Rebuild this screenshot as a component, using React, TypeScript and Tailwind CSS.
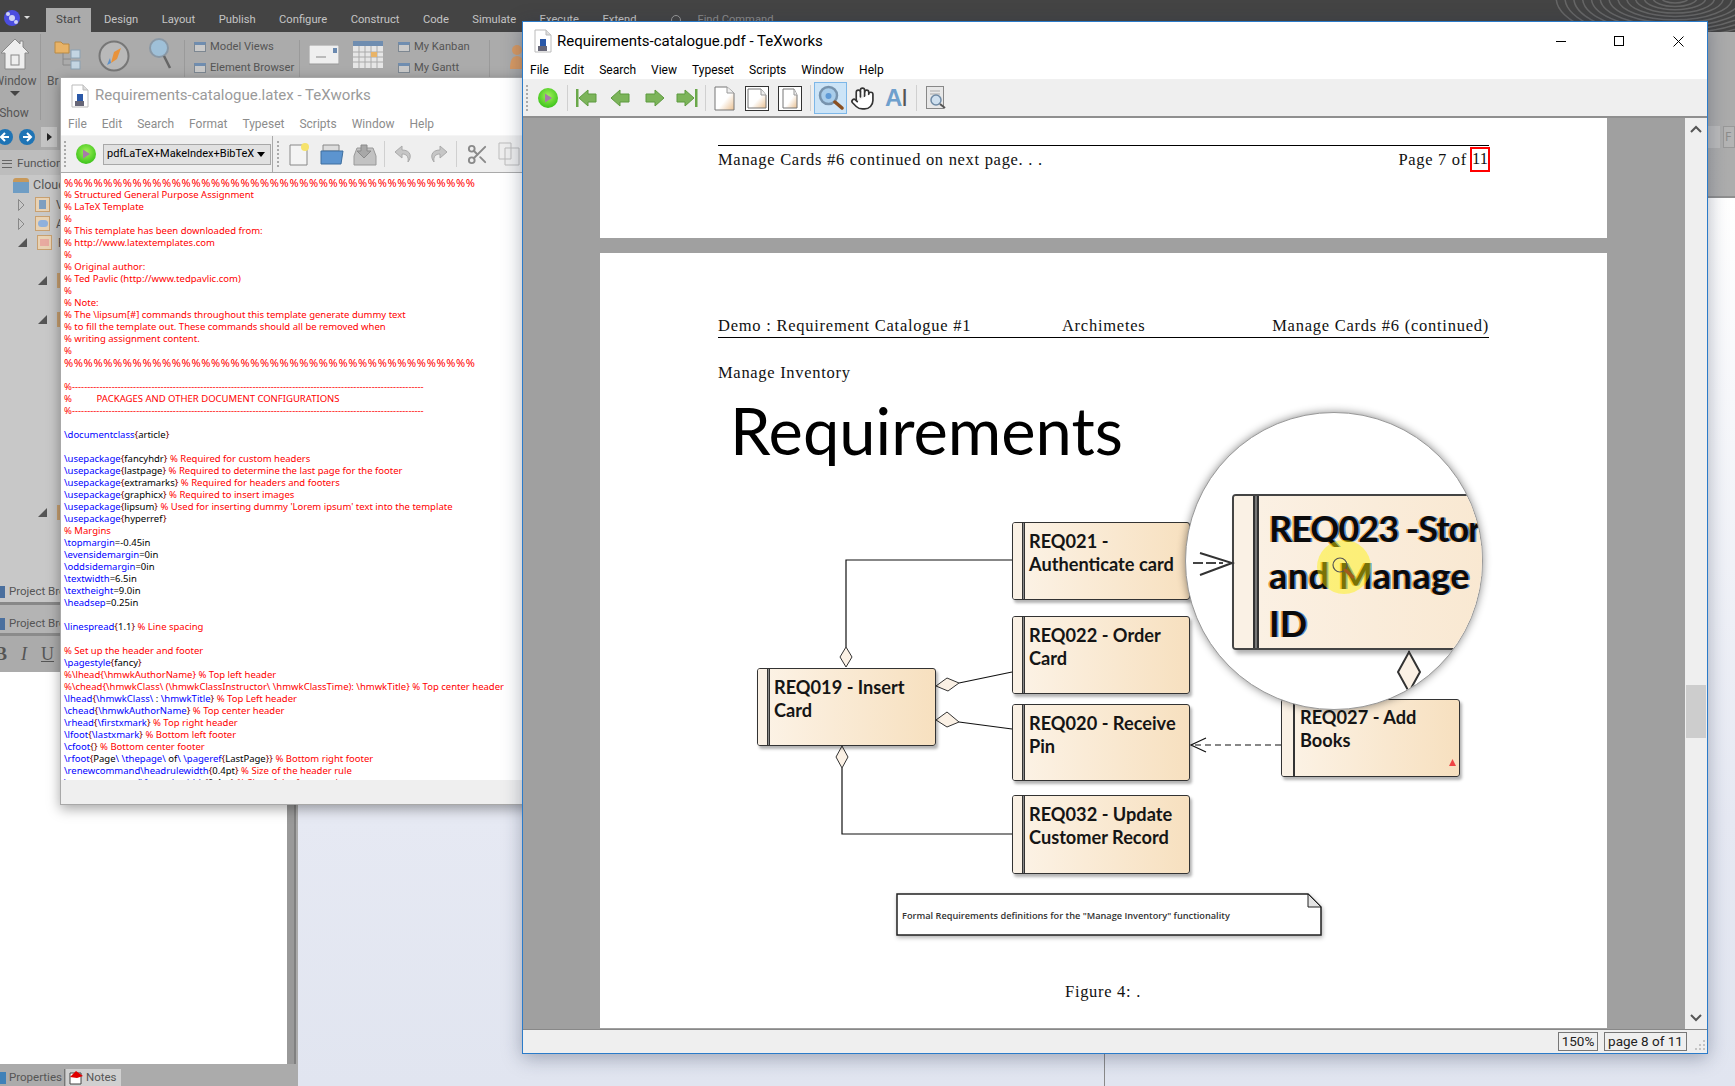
import { Hand, Scissors } from 'lucide-react'

const ui = "font-['Roboto',sans-serif]"
const pct42 = '%'.repeat(42)
const dashes = '-'.repeat(115)

const sourceLines = [
  pct42,
  '% Structured General Purpose Assignment',
  '% LaTeX Template',
  '%',
  '% This template has been downloaded from:',
  '% http://www.latextemplates.com',
  '%',
  '% Original author:',
  '% Ted Pavlic (http://www.tedpavlic.com)',
  '%',
  '% Note:',
  '% The \\lipsum[#] commands throughout this template generate dummy text',
  '% to fill the template out. These commands should all be removed when',
  '% writing assignment content.',
  '%',
  pct42,
  '',
  '%' + dashes,
  '%\u00a0\u00a0\u00a0\u00a0\u00a0\u00a0\u00a0\u00a0\u00a0\u00a0PACKAGES AND OTHER DOCUMENT CONFIGURATIONS',
  '%' + dashes,
  '',
  '\\documentclass{article}',
  '',
  '\\usepackage{fancyhdr} % Required for custom headers',
  '\\usepackage{lastpage} % Required to determine the last page for the footer',
  '\\usepackage{extramarks} % Required for headers and footers',
  '\\usepackage{graphicx} % Required to insert images',
  "\\usepackage{lipsum} % Used for inserting dummy 'Lorem ipsum' text into the template",
  '\\usepackage{hyperref}',
  '% Margins',
  '\\topmargin=-0.45in',
  '\\evensidemargin=0in',
  '\\oddsidemargin=0in',
  '\\textwidth=6.5in',
  '\\textheight=9.0in',
  '\\headsep=0.25in',
  '',
  '\\linespread{1.1} % Line spacing',
  '',
  '% Set up the header and footer',
  '\\pagestyle{fancy}',
  '%\\lhead{\\hmwkAuthorName} % Top left header',
  '%\\chead{\\hmwkClass\\ (\\hmwkClassInstructor\\ \\hmwkClassTime): \\hmwkTitle} % Top center header',
  '\\lhead{\\hmwkClass\\ : \\hmwkTitle} % Top Left header',
  '\\chead{\\hmwkAuthorName} % Top center header',
  '\\rhead{\\firstxmark} % Top right header',
  '\\lfoot{\\lastxmark} % Bottom left footer',
  '\\cfoot{} % Bottom center footer',
  '\\rfoot{Page\\ \\thepage\\ of\\ \\pageref{LastPage}} % Bottom right footer',
  '\\renewcommand\\headrulewidth{0.4pt} % Size of the header rule',
  '\\renewcommand\\footrulewidth{0.4pt} % Size of the footer rule',
]

function SourceLine({ text }: { text: string }) {
  const at = text.indexOf('%')
  const code = at < 0 ? text : text.slice(0, at)
  const comment = at < 0 ? '' : text.slice(at)
  const parts = code.split(/(\\[a-zA-Z]*|[{}])/).filter(Boolean)
  const spread = text === pct42 ? 'text-[11px] tracking-[0.66px]' : ''
  return (
    <div className={`h-[12px] whitespace-pre leading-[12px] ${spread}`}>
      {parts.map((p, i) => {
        const tone = p[0] === '\\' ? 'text-[#0000ff]' : p === '{' || p === '}' ? 'text-[#800000]' : 'text-black'
        return <span key={i} className={tone}>{p}</span>
      })}
      <span className="text-[#ff0000]">{comment}</span>
      {text === '' ? '\u00a0' : null}
    </div>
  )
}

function DocIcon({ dim = false }: { dim?: boolean }) {
  return (
    <svg width="18" height="24" viewBox="0 0 18 24" className={dim ? 'shrink-0 opacity-70' : 'shrink-0'}>
      <path d="M1 1h11l5 5v17H1z" fill="#fff" stroke="#bbb" />
      <path d="M12 1v5h5" fill="#ddd" stroke="#bbb" />
      <rect x="4" y="17" width="9" height="5" fill="#667" />
      <rect x="6" y="10" width="6" height="7" fill="#2a58a8" />
    </svg>
  )
}

function GoButton() {
  return (
    <svg width="20" height="20" viewBox="0 0 20 20" className="shrink-0">
      <defs>
        <radialGradient id="go" cx="50%" cy="40%" r="60%">
          <stop offset="0" stopColor="#a4f25a" />
          <stop offset="1" stopColor="#3bc31a" />
        </radialGradient>
      </defs>
      <circle cx="10" cy="10" r="10" fill="url(#go)" />
      <path d="M7 5.5l7 4.5-7 4.5z" fill="#a77ba8" />
    </svg>
  )
}

function Arrow({ path, bar }: { path: string; bar?: string }) {
  return (
    <svg width="22" height="20" viewBox="0 0 22 20" className="shrink-0">
      <path d={path} fill="#7cb45a" stroke="#5d9a3f" />
      {bar ? <rect x={bar === 'l' ? 1 : 19} y="1" width="2.5" height="18" fill="#6aa84a" /> : null}
    </svg>
  )
}

function PageIcon({ w, framed }: { w: number; framed: number }) {
  return (
    <svg width={w} height="25" viewBox={`0 0 ${w} 25`} className="shrink-0">
      <defs>
        <linearGradient id={`pg${w}${framed}`} x1="0" y1="0" x2="1" y2="1">
          <stop offset="0.55" stopColor="#fff" />
          <stop offset="1" stopColor="#e9bf90" />
        </linearGradient>
      </defs>
      {framed ? <rect x="0.5" y="0.5" width={w - 1} height="24" fill="#fff" stroke="#333" /> : null}
      <path d={`M${framed + 1} ${framed ? 3 : 1}H${w - 8}L${w - framed - 1} ${framed ? 9 : 7}V${framed ? 22 : 24}H${framed + 1}z`} fill={`url(#pg${w}${framed})`} stroke="#777" />
      <path d={`M${w - 8} ${framed ? 3 : 1}V${framed ? 9 : 7}H${w - framed - 1}`} fill="#eee" stroke="#999" />
    </svg>
  )
}

function Glass({ size = 26 }: { size?: number }) {
  return (
    <svg width={size} height={size} viewBox="0 0 26 26" className="shrink-0">
      <circle cx="10.5" cy="10.5" r="8.5" fill="#a9cdea" stroke="#7793ad" strokeWidth="2.5" />
      <circle cx="10.5" cy="11" r="3" fill="#5f9ad6" />
      <path d="M17 17l7 6" stroke="#8a4f20" strokeWidth="3.5" strokeLinecap="round" />
    </svg>
  )
}

function WinIcon() {
  return (
    <span className="h-[10px] w-[12px] shrink-0 border border-[#7d8791] border-t-[3px] border-t-[#6f8db0] bg-[#c9c9c9]" />
  )
}

function Sep({ tone = 'bg-[#d0d0d0]', h = 'h-[26px]' }: { tone?: string; h?: string }) {
  return <span className={`block w-px shrink-0 ${h} ${tone}`} />
}

function Grip() {
  return <span className="block h-[26px] w-[3px] shrink-0 border-l-2 border-dotted border-[#aaa]" />
}

function TopBar() {
  return (
    <div className={`relative flex h-[32px] shrink-0 items-end overflow-hidden bg-[#444] ${ui}`}>
      <svg width="28" height="20" viewBox="0 0 28 20" className="mb-[4px] ml-[3px] shrink-0">
        <circle cx="9" cy="10" r="8" fill="#4b4de0" />
        <circle cx="9" cy="10" r="3" fill="#cfd2f5" />
        <circle cx="5" cy="6" r="2" fill="#cfd2f5" />
        <circle cx="13" cy="14" r="2" fill="#cfd2f5" />
        <path d="M21 8h6l-3 3z" fill="#ddd" />
      </svg>
      <div className="ml-[15px] flex h-[24px] w-[45px] items-center justify-center bg-[#ababab] text-[11.5px] text-[#444]">Start</div>
      <div className="ml-[13px] flex h-[24px] items-center gap-[23.5px] text-[11.2px] text-[#c4c4c4]">
        <span>Design</span>
        <span>Layout</span>
        <span>Publish</span>
        <span>Configure</span>
        <span>Construct</span>
        <span>Code</span>
        <span>Simulate</span>
        <span>Execute</span>
        <span>Extend</span>
        <svg width="12" height="12" viewBox="0 0 12 12" className="ml-[10px]"><circle cx="6" cy="6" r="4.5" fill="none" stroke="#999" /></svg>
        <span className="-ml-[8px] text-[#8b8b8b]">Find Command</span>
      </div>
      <svg width="190" height="32" viewBox="0 0 190 32" className="absolute right-0 top-0">
        {[12, 20, 28, 36, 44, 52, 60, 68, 76, 84, 92, 100, 108].map(r => (
          <ellipse key={r} cx="130" cy="-2" rx={r * 1.1} ry={r * 0.42} fill="none" stroke="#666" strokeWidth="1.5" />
        ))}
      </svg>
    </div>
  )
}

function Ribbon() {
  return (
    <div className={`flex h-[88px] shrink-0 items-start bg-[#ababab] text-[#555] ${ui}`}>
      <div className="flex w-[40px] shrink-0 flex-col items-center text-[12px] leading-[16px]">
        <svg width="30" height="32" viewBox="0 0 30 32" className="mt-[6px] -ml-[10px]">
          <path d="M15 1L1 15h4v16h20V15h4L23 9V3h-3v3z" fill="#eee" stroke="#888" />
          <rect x="11" y="17" width="8" height="10" fill="#eee" stroke="#888" />
        </svg>
        <span className="mt-[3px] -ml-[10px]">Window</span>
        <span className="mt-[2px] -ml-[10px] h-0 w-0 border-x-[5px] border-t-[5px] border-x-transparent border-t-[#444]" />
        <span className="mt-[9px] -ml-[12px]">Show</span>
      </div>
      <span className="mt-[2px] h-[86px] w-px bg-[#9a9a9a]" />
      <div className="ml-[6px] flex flex-col text-[12px]">
        <svg width="30" height="30" viewBox="0 0 30 30" className="mt-[8px] ml-[6px]">
          <path d="M2 2h6l2 2h6v9H2z" fill="#e8b367" stroke="#b98a45" />
          <path d="M10 13v12h8M10 19h8" fill="none" stroke="#888" />
          <rect x="18" y="10" width="9" height="8" fill="#c3d5e2" stroke="#8ba2b3" />
          <rect x="18" y="21" width="9" height="8" fill="#c3d5e2" stroke="#8ba2b3" />
        </svg>
        <span className="mt-[2px]">Br</span>
      </div>
      <svg width="32" height="32" viewBox="0 0 32 32" className="ml-[15px] mt-[8px]">
        <circle cx="16" cy="16" r="14.5" fill="#b9b9b9" stroke="#777" strokeWidth="2" />
        <path d="M23 8l-4 11-6 4 3-11z" fill="#e8923a" />
        <path d="M13 23l-4 2 3-7z" fill="#5a8fc9" />
      </svg>
      <svg width="24" height="32" viewBox="0 0 24 32" className="ml-[19px] mt-[6px]">
        <circle cx="10" cy="10" r="9" fill="#9fc0d8" stroke="#8a98a5" strokeWidth="2" />
        <path d="M15 18l6 12" stroke="#666" strokeWidth="2.5" />
      </svg>
      <span className="ml-[11px] mt-[8px] h-[70px] w-px bg-[#9a9a9a]" />
      <div className="ml-[9px] mt-[7px] flex w-[105px] shrink-0 flex-col gap-[5px] whitespace-nowrap text-[11.2px] text-[#555]">
        <div className="flex h-[16px] items-center gap-[4px]"><WinIcon />Model Views</div>
        <div className="flex h-[16px] items-center gap-[4px]"><WinIcon />Element Browser</div>
      </div>
      <span className="mt-[8px] h-[70px] w-px bg-[#9a9a9a]" />
      <svg width="30" height="20" viewBox="0 0 30 20" className="ml-[9px] mt-[13px] shrink-0">
        <rect width="30" height="19" fill="#efefef" stroke="#999" />
        <rect x="24" y="3" width="4" height="5" fill="#6b8ab0" />
        <rect x="7" y="11" width="10" height="2" fill="#bbb" />
      </svg>
      <svg width="30" height="27" viewBox="0 0 30 27" className="ml-[14px] mt-[9px] shrink-0">
        <rect width="30" height="5" fill="#6f8db0" />
        <rect y="5" width="30" height="22" fill="#e6e6e6" />
        <path d="M6 5v22M12 5v22M18 5v22M24 5v22M0 11h30M0 16h30M0 21h30" stroke="#aaa" />
        <rect x="18" y="11" width="6" height="5" fill="#e8b367" />
      </svg>
      <div className="ml-[15px] mt-[7px] flex w-[91px] shrink-0 flex-col gap-[5px] whitespace-nowrap text-[11.2px] text-[#555]">
        <div className="flex h-[16px] items-center gap-[4px]"><WinIcon />My Kanban</div>
        <div className="flex h-[16px] items-center gap-[4px]"><WinIcon />My Gantt</div>
      </div>
      <span className="mt-[8px] h-[70px] w-px bg-[#9a9a9a]" />
      <svg width="16" height="28" viewBox="0 0 16 28" className="ml-[19px] mt-[9px] shrink-0">
        <circle cx="8" cy="9" r="5" fill="#d89a63" />
        <path d="M1 28c0-10 3-13 7-13s7 3 7 13z" fill="#d89a63" />
      </svg>
    </div>
  )
}

function TreeRow({ icon, arrow, label }: { icon: string; arrow: 'open' | 'solid'; label: string }) {
  return (
    <div className="flex h-[19px] items-center pl-[18px]">
      {arrow === 'open' ? (
        <svg width="7" height="12" viewBox="0 0 7 12" className="shrink-0"><path d="M0.5 0.5L6 6L0.5 11.5Z" fill="none" stroke="#888" /></svg>
      ) : (
        <span className="h-0 w-0 border-b-[9px] border-l-[9px] border-b-[#555] border-l-transparent" />
      )}
      <span className={`ml-[10px] flex h-[15px] w-[15px] items-center justify-center border border-[#c8a070] bg-[#e8d2b4]`}>
        <span className={icon} />
      </span>
      <span className="ml-[6px] text-[12px] text-[#555]">{label}</span>
    </div>
  )
}

function CircleArrow({ d }: { d: string }) {
  return (
    <svg width="16" height="16" viewBox="0 0 16 16" className="shrink-0">
      <circle cx="8" cy="8" r="8" fill="#1f74b5" />
      <path d={d} fill="none" stroke="#fff" strokeWidth="2" />
    </svg>
  )
}

function LeftColumn() {
  return (
    <div className={`flex h-full w-[298px] shrink-0 flex-col text-[#555] ${ui}`}>
      <div className="flex h-[30px] shrink-0 items-center bg-[#ababab] pt-[4px]">
        <span className="-ml-[3px]"><CircleArrow d="M12 8H4M8 4L4 8L8 12" /></span>
        <span className="ml-[6px]"><CircleArrow d="M4 8H12M8 4L12 8L8 12" /></span>
        <span className="ml-[6px] flex h-[20px] w-[16px] items-center justify-center bg-[#c4c4c4]">
          <span className="h-0 w-0 border-y-[4px] border-l-[5px] border-y-transparent border-l-[#222]" />
        </span>
      </div>
      <div className="flex h-[25px] shrink-0 items-center bg-[#bdbdbd] pt-[2px] text-[11.8px]">
        <span className="ml-[2px] flex h-[8px] w-[10px] flex-col justify-between">
          <span className="h-px bg-[#666]" /><span className="h-px bg-[#666]" /><span className="h-px bg-[#666]" />
        </span>
        <span className="ml-[5px]">Function</span>
      </div>
      <div className="flex h-[407px] shrink-0 flex-col bg-[#c8c8c8]">
        <div className="flex h-[20px] items-center pl-[13px] text-[12.5px]">
          <span className="h-[15px] w-[16px] rounded-t-[3px] border-t-[4px] border-[#c8995a] bg-[#6f9dc4]" />
          <span className="ml-[4px]">Cloud</span>
        </div>
        <TreeRow arrow="open" icon="h-[9px] w-[7px] bg-[#7f9fc0]" label="V" />
        <TreeRow arrow="open" icon="h-[7px] w-[10px] rounded-full bg-[#8fb1dd]" label="A" />
        <TreeRow arrow="solid" icon="h-[7px] w-[9px] bg-[#e8aaa0]" label="F" />
        <div className="mt-[19px] flex h-[19px] items-center pl-[38px]"><span className="h-0 w-0 border-b-[9px] border-l-[9px] border-b-[#555] border-l-transparent" /><span className="ml-[10px] h-[15px] w-[3px] bg-[#c8a070]" /></div>
        <div className="mt-[20px] flex h-[19px] items-center pl-[38px]"><span className="h-0 w-0 border-b-[9px] border-l-[9px] border-b-[#555] border-l-transparent" /><span className="ml-[10px] h-[15px] w-[3px] bg-[#c8a070]" /></div>
        <div className="mt-[174px] flex h-[19px] items-center pl-[38px]"><span className="h-0 w-0 border-b-[9px] border-l-[9px] border-b-[#555] border-l-transparent" /><span className="ml-[10px] h-[15px] w-[3px] bg-[#c8a070]" /></div>
      </div>
      <div className="flex h-[20px] shrink-0 items-center gap-[4px] bg-[#c8c8c8] text-[11.5px]">
        <span className="h-[12px] w-[5px] bg-[#4a6f9e]" />Project Bro
      </div>
      <div className="h-[3px] shrink-0 bg-[#888]" />
      <div className="h-[10px] shrink-0 bg-[#b4b4b4]" />
      <div className="flex h-[18px] shrink-0 items-center gap-[4px] bg-[#b4b4b4] text-[11.5px]">
        <span className="h-[12px] w-[5px] bg-[#4a6f9e]" />Project Bro
      </div>
      <div className="flex h-[39px] shrink-0 items-center gap-[14px] border-t-[3px] border-[#8b8b8b] bg-[#ababab] font-['Liberation_Serif',serif] text-[18px]">
        <span className="-ml-[5px] font-bold">B</span>
        <span className="italic">I</span>
        <span className="underline">U</span>
      </div>
      <div className="flex min-h-0 flex-1">
        <div className="w-[287px] bg-white" />
        <div className="w-[7px] bg-[#999]" />
        <div className="w-[2px] bg-[#808080]" />
        <div className="w-[2px] bg-[#aaa]" />
      </div>
      <div className="flex h-[22px] shrink-0 items-end bg-[#ababab] text-[11.5px]">
        <div className="flex h-[17px] w-[65px] items-center gap-[3px] border-r border-[#777]">
          <span className="h-[12px] w-[6px] bg-[#3f81b8]" />Properties
        </div>
        <div className="ml-px flex h-[17px] w-[55px] items-center gap-[3px] bg-[#d0d0d0] pl-[3px]">
          <svg width="14" height="15" viewBox="0 0 14 15" className="shrink-0">
            <path d="M1 3h11v11H1z" fill="#fff" stroke="#444" />
            <path d="M1 7L7 1L14 6L8 8z" fill="#e00000" />
          </svg>
          Notes
        </div>
      </div>
    </div>
  )
}

function EditorWindow() {
  return (
    <div className={`absolute left-[60px] top-[77px] flex h-[728px] w-[480px] flex-col border border-[#a8a8a8] bg-white shadow-[0_4px_12px_rgba(0,0,0,0.35)] ${ui}`}>
      <div className="flex h-[35px] shrink-0 items-center pl-[10px]">
        <DocIcon />
        <span className="ml-[6px] text-[15px] text-[#9a9a9a]">Requirements-catalogue.latex - TeXworks</span>
      </div>
      <div className="flex h-[22px] shrink-0 items-center gap-[15px] pl-[7px] text-[12px] text-[#8c8c8c]">
        <span>File</span><span>Edit</span><span>Search</span><span>Format</span><span>Typeset</span><span>Scripts</span><span>Window</span><span>Help</span>
      </div>
      <div className="flex h-[38px] shrink-0 items-center border-y border-b-[#aaa] border-t-[#f5f5f5] bg-[#efefef] pl-[3px]">
        <Grip />
        <span className="ml-[9px]"><GoButton /></span>
        <div className="ml-[7px] flex h-[21px] w-[168px] shrink-0 items-center justify-between border border-[#a8a8a8] bg-[#e1e1e1] pl-[3px] pr-[5px] text-[11px] text-black">
          pdfLaTeX+MakeIndex+BibTeX
          <span className="h-0 w-0 border-x-[4px] border-t-[5px] border-x-transparent border-t-black" />
        </div>
        <span className="ml-[1px]"><Sep tone="bg-[#aaa]" h="h-[37px]" /></span>
        <span className="ml-[4px]"><Grip /></span>
        <svg width="20" height="24" viewBox="0 0 20 24" className="ml-[9px] shrink-0">
          <path d="M1 3h17v20H1z" fill="#f4f4f4" stroke="#888" />
          <circle cx="16" cy="5" r="4" fill="#f6e36c" />
        </svg>
        <svg width="24" height="22" viewBox="0 0 24 22" className="ml-[11px] shrink-0">
          <path d="M3 2h16v6H3z" fill="#ddd" stroke="#888" />
          <path d="M1 8h22l-2 13H1z" fill="#5c94cf" stroke="#3f6f9f" />
        </svg>
        <svg width="24" height="23" viewBox="0 0 24 23" className="ml-[9px] shrink-0">
          <path d="M1 13l3-8h16l3 8v9H1z" fill="#c2c2c2" stroke="#999" />
          <path d="M8 2h6v6h4l-7 7-7-7h4z" fill="#a8a8a8" stroke="#8a8a8a" />
        </svg>
        <span className="ml-[7px]"><Sep /></span>
        <svg width="20" height="20" viewBox="0 0 20 20" className="ml-[9px] shrink-0">
          <path d="M8 2L1 8l7 6v-4c4 0 7 2 6 8 4-5 3-12-6-12z" fill="#c6c6c6" stroke="#aaa" />
        </svg>
        <svg width="20" height="20" viewBox="0 0 20 20" className="ml-[14px] shrink-0">
          <path d="M12 2l7 6-7 6v-4c-4 0-7 2-6 8-4-5-3-12 6-12z" fill="#c6c6c6" stroke="#aaa" />
        </svg>
        <span className="ml-[8px]"><Sep /></span>
        <Scissors size={23} strokeWidth={2} className="ml-[9px] shrink-0 text-[#8a8a8a]" />
        <svg width="24" height="24" viewBox="0 0 24 24" className="ml-[9px] shrink-0">
          <path d="M1 1h12v16H1zM7 6h14v17H7z" fill="#eee" stroke="#bbb" />
        </svg>
      </div>
      <div className="min-h-0 flex-1 overflow-hidden bg-white pl-[3px] pt-[4px] font-['Noto_Sans',sans-serif] text-[9.5px]">
        {sourceLines.map((line, i) => <SourceLine key={i} text={line} />)}
      </div>
      <div className="h-[24px] shrink-0 bg-[#efefef]" />
    </div>
  )
}

function Node({ pos, bars = 'w-[3px] border-x border-[#333] bg-[#888]', strip = 'w-[9px]', pad = 'pl-[4px] pt-[7px]', lines }: { pos: string; bars?: string; strip?: string; pad?: string; lines: string[] }) {
  return (
    <div className={`absolute flex overflow-hidden rounded-[3px] border border-[#333] bg-gradient-to-r from-[#fcf3e7] to-[#f7e0bf] shadow-[2px_3px_3px_rgba(0,0,0,0.3)] ${pos}`}>
      <div className={`h-full shrink-0 bg-[#faf1e5] ${strip}`} />
      <div className={`h-full shrink-0 ${bars}`} />
      <div className={`font-['Lato',sans-serif] text-[18.2px] font-bold leading-[23.7px] text-[#151515] ${pad}`}>
        {lines.map(l => <div key={l} className="whitespace-nowrap">{l}</div>)}
      </div>
    </div>
  )
}

function Magnifier() {
  const fringe = '[text-shadow:1.5px_0_0_rgba(0,90,200,0.65),-1.5px_0_0_rgba(220,120,0,0.65)]'
  return (
    <div className="absolute left-[467px] top-[18px] h-[298px] w-[298px] overflow-hidden rounded-full border border-[#999] bg-white shadow-[0_0_8px_rgba(0,0,0,0.45)]">
      <div className="absolute left-[46px] top-[81px] flex h-[156px] w-[400px] overflow-hidden rounded-[4px] border-2 border-[#444] bg-gradient-to-r from-[#fbf1e5] to-[#f8e3c6] shadow-[3px_4px_4px_rgba(0,0,0,0.3)]">
        <div className="h-full w-[19px] shrink-0 bg-[#faf1e5]" />
        <div className="h-full w-[6px] shrink-0 border-x-2 border-[#333] bg-[#777]" />
        <div className={`pl-[10px] pt-[9px] font-['Lato',sans-serif] text-[36px] font-bold leading-[47.5px] text-[#0b0b0b] ${fringe}`}>
          <div className="whitespace-nowrap tracking-[-1px]">REQ023 -Store</div>
          <div className="whitespace-nowrap tracking-[0.5px]">and Manage</div>
          <div>ID</div>
        </div>
      </div>
      <div className="absolute left-[131px] top-[127px] h-[54px] w-[54px] rounded-full bg-[#fff200]/45" />
      <svg width="298" height="298" viewBox="0 0 298 298" className="absolute left-0 top-0">
        <path d="M7 150H37" stroke="#444" strokeWidth="2" strokeDasharray="10 3" />
        <path d="M14 140L46 150L14 162" fill="none" stroke="#333" strokeWidth="2" />
        <path d="M223 238V243M223 279V290" stroke="#333" strokeWidth="2" />
        <path d="M223 239L234 259L223 279L212 259Z" fill="#fbf1e5" stroke="#333" strokeWidth="2" />
        <circle cx="154" cy="152" r="7" fill="none" stroke="#555" strokeWidth="1.2" />
        <path d="M159 157L167 164" stroke="#a45a1c" strokeWidth="3" strokeLinecap="round" />
      </svg>
    </div>
  )
}

function Diagram() {
  return (
    <div className="relative ml-[118px] mt-[8px] h-[620px] w-[880px]">
      <div className="absolute left-[12px] -top-[2px] font-['Lato',sans-serif] text-[65px] leading-[76px] text-black">Requirements</div>
      <svg width="880" height="620" viewBox="0 0 880 620" className="absolute left-0 top-0">
        <path d="M294 166H128V253M124 374V440H294M241 289L294 278M241 328L294 335" fill="none" stroke="#111" strokeWidth="1.2" />
        <path d="M128 253L134 263L128 273L122 263Z" fill="#fbf1e5" stroke="#333" />
        <path d="M124 352L130 363L124 374L118 363Z" fill="#fbf1e5" stroke="#333" />
        <path d="M218 292L229 284L241 289L230 297Z" fill="#fbf1e5" stroke="#333" />
        <path d="M218 326L229 318L241 328L229 333Z" fill="#fbf1e5" stroke="#333" />
        <path d="M563 351H474" stroke="#111" strokeWidth="1.2" strokeDasharray="6 4" />
        <path d="M488 344L473 351L488 358" fill="none" stroke="#111" strokeWidth="1.2" />
      </svg>
      <Node pos="left-[294px] top-[128px] h-[78px] w-[178px]" lines={['REQ021 -', 'Authenticate card']} />
      <Node pos="left-[294px] top-[222px] h-[78px] w-[178px]" lines={['REQ022 - Order', 'Card']} />
      <Node pos="left-[294px] top-[310px] h-[77px] w-[178px]" lines={['REQ020 - Receive', 'Pin']} />
      <Node pos="left-[294px] top-[401px] h-[79px] w-[178px]" lines={['REQ032 - Update', 'Customer Record']} />
      <Node pos="left-[39px] top-[274px] h-[78px] w-[179px]" lines={['REQ019 - Insert', 'Card']} />
      <Node pos="left-[563px] top-[305px] h-[78px] w-[179px]" strip="w-[11px]" bars="w-[2px] border-x border-[#333]" pad="pl-[5px] pt-[6px]" lines={['REQ027 - Add', 'Books']} />
      <svg width="7" height="7" viewBox="0 0 7 7" className="absolute left-[731px] top-[365px]"><path d="M3.5 0L7 7H0z" fill="#ee4444" /></svg>
      <Magnifier />
      <svg width="426" height="44" viewBox="0 0 426 44" className="absolute left-[178px] top-[499px] drop-shadow-[1px_2px_2px_rgba(0,0,0,0.3)]">
        <path d="M1 1H412L425 14V42H1Z" fill="#fff" stroke="#222" strokeWidth="1.5" />
        <path d="M412 1V14H425Z" fill="#e4e4e4" stroke="#222" strokeWidth="1" />
      </svg>
      <div className="absolute left-[184px] top-[514px] font-['Open_Sans',sans-serif] text-[9.2px] font-semibold leading-[16px] text-[#333]">
        Formal Requirements definitions for the &quot;Manage Inventory&quot; functionality
      </div>
      <div className="absolute left-[347px] top-[588px] text-[16.5px] leading-[20px] tracking-[0.7px]">Figure 4: .</div>
    </div>
  )
}

function PdfWindow() {
  return (
    <div className={`absolute left-[522px] top-[21px] flex h-[1033px] w-[1186px] flex-col border border-[#2b7bc9] bg-white shadow-[0_4px_18px_rgba(30,40,70,0.35)] ${ui}`}>
      <div className="flex h-[38px] shrink-0 items-center pl-[11px]">
        <DocIcon />
        <span className="ml-[5px] text-[15px] text-black">Requirements-catalogue.pdf - TeXworks</span>
        <div className="ml-auto flex items-center pr-[23px]">
          <span className="h-px w-[10px] bg-black" />
          <span className="ml-[48px] h-[10px] w-[10px] border border-black" />
          <svg width="11" height="11" viewBox="0 0 11 11" className="ml-[49px]"><path d="M0.5 0.5L10.5 10.5M10.5 0.5L0.5 10.5" stroke="#000" /></svg>
        </div>
      </div>
      <div className="flex h-[20px] shrink-0 items-center gap-[15px] border-b border-[#f0f0f0] pl-[7px] text-[12px] text-black">
        <span>File</span><span>Edit</span><span>Search</span><span>View</span><span>Typeset</span><span>Scripts</span><span>Window</span><span>Help</span>
      </div>
      <div className="flex h-[38px] shrink-0 items-center border-b-2 border-[#8f8f8f] bg-[#efefef] pl-[3px]">
        <Grip />
        <span className="ml-[9px]"><GoButton /></span>
        <span className="ml-[9px]"><Sep /></span>
        <span className="ml-[7px]"><Arrow path="M4 10L13 2V6H21V14H13V18Z" bar="l" /></span>
        <span className="ml-[12px]"><Arrow path="M2 10L11 2V6H20V14H11V18Z" /></span>
        <span className="ml-[13px]"><Arrow path="M20 10L11 2V6H2V14H11V18Z" /></span>
        <span className="ml-[10px]"><Arrow path="M18 10L9 2V6H1V14H9V18Z" bar="r" /></span>
        <span className="ml-[7px]"><Sep /></span>
        <span className="ml-[8px]"><PageIcon w={21} framed={0} /></span>
        <span className="ml-[10px]"><PageIcon w={24} framed={2} /></span>
        <span className="ml-[9px]"><PageIcon w={24} framed={4} /></span>
        <span className="ml-[8px]"><Sep /></span>
        <div className="ml-[3px] flex h-[32px] w-[33px] shrink-0 items-center justify-center border border-[#7db7e8] bg-[#cce4f7]"><Glass /></div>
        <Hand size={25} strokeWidth={1.6} className="ml-[3px] shrink-0 fill-white text-[#333]" />
        <div className="ml-[10px] flex w-[24px] shrink-0 items-center font-['Liberation_Sans',sans-serif] text-[24px] font-bold leading-none text-[#6fa0cd]">
          A<span className="-ml-[1px] font-normal text-[#555]">I</span>
        </div>
        <span className="ml-[7px]"><Sep /></span>
        <svg width="21" height="24" viewBox="0 0 21 24" className="ml-[9px] shrink-0">
          <rect x="0.5" y="0.5" width="17" height="22" fill="#e8e8e8" stroke="#888" />
          <path d="M4 5h10M4 8h10" stroke="#aaa" />
          <circle cx="10" cy="14" r="5" fill="#cfe0ef" stroke="#6f8aa5" strokeWidth="1.5" />
          <path d="M14 18l5 4" stroke="#555" strokeWidth="2" />
        </svg>
      </div>
      <div className="flex min-h-0 flex-1">
        <div className="flex min-w-0 flex-1 flex-col gap-[15px] overflow-hidden bg-[#a0a0a0] pl-[77px] pr-[78px] font-['Liberation_Serif',serif] text-[16.5px] text-[#111]">
          <div className="h-[120px] shrink-0 bg-white px-[118px] pt-[27px]">
            <div className="flex h-[30px] items-start justify-between border-t border-black pt-[2px] tracking-[0.7px]">
              <span>Manage Cards #6 continued on next page. . .</span>
              <span className="flex items-start">
                Page 7 of
                <span className="-mt-[1px] ml-[3px] -mr-[1px] flex h-[25px] w-[20px] items-center justify-center border-2 border-[#ff0000] tracking-normal">11</span>
              </span>
            </div>
          </div>
          <div className="h-[775px] shrink-0 bg-white">
            <div className="mx-[118px] flex items-end justify-between border-b border-black pt-[62px] leading-[22px] tracking-[0.75px]">
              <span>Demo : Requirement Catalogue #1</span>
              <span className="-ml-[36px]">Archimetes</span>
              <span>Manage Cards #6 (continued)</span>
            </div>
            <div className="ml-[118px] mt-[23px] tracking-[0.7px]">Manage Inventory</div>
            <Diagram />
          </div>
        </div>
        <div className="flex w-[22px] shrink-0 flex-col items-center justify-between bg-[#efefef] py-[7px]">
          <svg width="12" height="8" viewBox="0 0 12 8"><path d="M1 7L6 2L11 7" fill="none" stroke="#555" strokeWidth="2" /></svg>
          <svg width="12" height="8" viewBox="0 0 12 8"><path d="M1 1L6 6L11 1" fill="none" stroke="#555" strokeWidth="2" /></svg>
        </div>
      </div>
      <div className="flex h-[24px] shrink-0 items-center border-t border-[#888] bg-[#efefef] pl-[1035px] text-[13.5px] text-[#222]">
        <span className="flex h-[19px] w-[40px] items-center justify-center border border-[#777]">150%</span>
        <span className="ml-[6px] flex h-[19px] w-[83px] items-center justify-center border border-[#777]">page 8 of 11</span>
        <svg width="12" height="12" viewBox="0 0 12 12" className="ml-[7px] mt-[6px]">
          <path d="M9 1h2v2H9zM5 5h2v2H5zM9 5h2v2H9zM1 9h2v2H1zM5 9h2v2H5zM9 9h2v2H9z" fill="#c4c4c4" />
        </svg>
      </div>
      <div className="absolute left-[1163px] top-[663px] h-[53px] w-[20px] bg-[#cdcdcd]" />
    </div>
  )
}

export default function App() {
  return (
    <div className="relative flex h-[1086px] w-[1735px] flex-col overflow-hidden bg-white">
      <TopBar />
      <Ribbon />
      <div className="flex min-h-0 flex-1">
        <LeftColumn />
        <div className="flex min-w-0 flex-1 flex-col">
          <div className="flex h-[78px] shrink-0 justify-end gap-[3px] border-b-2 border-[#8f8f8f] bg-gradient-to-r from-[#9f9f9f] to-[#adadad] pt-[6px]">
            <span className="h-[22px] w-[13px] bg-[#bcbcbc]" />
            <span className="h-[22px] w-[12px] border border-[#999] bg-[#b4b4b4] pl-[1px] text-[12px] leading-[20px] text-[#8c8c8c]">F</span>
          </div>
          <div className="min-h-0 flex-1 bg-gradient-to-b from-white via-[#e6e9f3] via-70% to-[#e1e5f0]">
            <div className="ml-[806px] h-full w-[1px] bg-[#8a8a8a]" />
          </div>
        </div>
      </div>
      <EditorWindow />
      <PdfWindow />
    </div>
  )
}
